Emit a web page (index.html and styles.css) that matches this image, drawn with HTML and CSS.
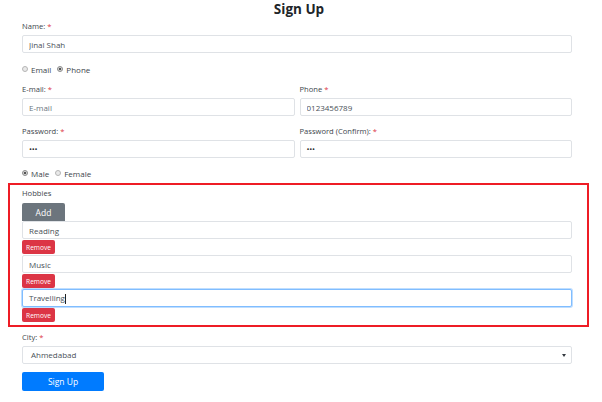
FILE: index.html
```html
<!DOCTYPE html>
<html>
<head>
<meta charset="utf-8">
<title>Sign Up</title>
<link rel="stylesheet" href="styles.css">
</head>
<body>
<div class="page">
  <h1 class="title">Sign Up</h1>

  <div class="group group-name">
    <label class="label">Name: <span class="req">*</span></label>
    <input class="field" type="text" value="Jinal Shah">
  </div>

  <div class="radios radios-contact">
    <span class="radio"></span><span class="radio-text">Email</span>
    <span class="radio checked"></span><span class="radio-text">Phone</span>
  </div>

  <div class="row row-contact">
    <div class="col">
      <label class="label">E-mail: <span class="req">*</span></label>
      <input class="field" type="text" placeholder="E-mail">
    </div>
    <div class="col">
      <label class="label">Phone <span class="req">*</span></label>
      <input class="field" type="text" value="0123456789">
    </div>
  </div>

  <div class="row row-pass">
    <div class="col">
      <label class="label">Password: <span class="req">*</span></label>
      <div class="field dots">&bull;&bull;&bull;</div>
    </div>
    <div class="col">
      <label class="label">Password (Confirm): <span class="req">*</span></label>
      <div class="field dots">&bull;&bull;&bull;</div>
    </div>
  </div>

  <div class="radios radios-gender">
    <span class="radio checked"></span><span class="radio-text">Male</span>
    <span class="radio"></span><span class="radio-text">Female</span>
  </div>

  <div class="hobbies">
    <div class="label hobbies-label">Hobbies</div>
    <button class="btn btn-add" type="button">Add</button>
    <input class="field hobby" type="text" value="Reading">
    <button class="btn btn-remove" type="button">Remove</button>
    <input class="field hobby" type="text" value="Music">
    <button class="btn btn-remove" type="button">Remove</button>
    <div class="field hobby focused">Travelling<span class="caret"></span></div>
    <button class="btn btn-remove" type="button">Remove</button>
  </div>

  <div class="group group-city">
    <label class="label">City: <span class="req">*</span></label>
    <div class="field select">
      <span>Ahmedabad</span>
      <span class="arrow"></span>
    </div>
  </div>

  <button class="btn btn-submit" type="button">Sign Up</button>
</div>
</body>
</html>
```

FILE: styles.css
```css
* {
  box-sizing: border-box;
}

html, body {
  margin: 0;
  padding: 0;
  background: #ffffff;
}

body {
  font-family: "Open Sans", "Noto Sans", "Liberation Sans", sans-serif;
  color: #212529;
}

.page {
  width: 550px;
  margin-left: 22px;
}

.title {
  margin: 0;
  height: 18px;
  line-height: 18px;
  font-size: 13.5px;
  font-weight: 700;
  text-align: center;
  color: #212529;
  padding-left: 4px;
}

.label {
  display: block;
  height: 10px;
  line-height: 10px;
  font-size: 7.6px;
  color: #40464c;
  margin-bottom: 4px;
  white-space: nowrap;
}

.req {
  color: #dc3545;
}

.field {
  display: block;
  width: 100%;
  height: 18px;
  margin: 0;
  padding: 0 6px;
  border: 1px solid #dfe2e6;
  border-radius: 2px;
  background: #ffffff;
  font-family: inherit;
  font-size: 8px;
  line-height: 16px;
  color: #495057;
  outline: none;
}

.field::placeholder {
  color: #6c757d;
}

.dots {
  font-size: 8px;
  letter-spacing: -0.3px;
  color: #333;
}

.group-name {
  margin-top: 3px;
}

.radios {
  display: flex;
  align-items: center;
  height: 12px;
  font-size: 8px;
  color: #40464c;
}

.radios-contact {
  margin-top: 10px;
}

.radios-gender {
  margin-top: 9px;
}

.radio {
  width: 6px;
  height: 6px;
  border-radius: 50%;
  border: 1px solid #b5b5b5;
  background: #e9e9e9;
  margin-right: 3px;
  flex: none;
}

.radio.checked {
  border-color: #8a8a8a;
  background: radial-gradient(circle, #555 0 1.2px, #dcdcdc 1.6px);
}

.radio-text {
  margin-right: 6px;
}

.row {
  display: flex;
  gap: 5px;
}

.col {
  flex: 1;
}

.row-contact {
  margin-top: 9px;
}

.row-pass {
  margin-top: 10px;
}

.hobbies {
  margin-top: 4px;
  margin-left: -14px;
  margin-right: -17px;
  padding: 3px 15px 2px 12px;
  border: 2px solid #ee1c25;
}

.hobbies-label {
  margin-bottom: 5px;
}

.btn {
  display: block;
  border: none;
  margin: 0;
  padding: 0;
  font-family: inherit;
  color: #ffffff;
  cursor: pointer;
}

.btn-add {
  width: 43px;
  height: 18px;
  background: #6c757d;
  border-radius: 2px 2px 0 0;
  font-size: 8.5px;
}

.hobby {
  height: 18px;
}

.btn-remove {
  width: 33px;
  height: 14px;
  margin-top: 1px;
  margin-bottom: 1px;
  background: #dc3545;
  border-radius: 2px;
  font-size: 6.6px;
}

.focused {
  border-color: #80bdff;
  box-shadow: 0 0 0 1px rgba(0, 123, 255, 0.25);
  color: #495057;
}

.caret {
  display: inline-block;
  width: 1px;
  height: 10px;
  background: #222;
  vertical-align: middle;
  margin-left: 0.5px;
}

.group-city {
  margin-top: 5px;
}

.select {
  display: flex;
  align-items: center;
  justify-content: space-between;
  padding-left: 8px;
  padding-right: 5px;
}

.arrow {
  width: 0;
  height: 0;
  border-left: 2.5px solid transparent;
  border-right: 2.5px solid transparent;
  border-top: 3.5px solid #343a40;
}

.btn-submit {
  margin-top: 8px;
  width: 82px;
  height: 19px;
  background: #007bff;
  border-radius: 2px;
  font-size: 8.5px;
}
```
